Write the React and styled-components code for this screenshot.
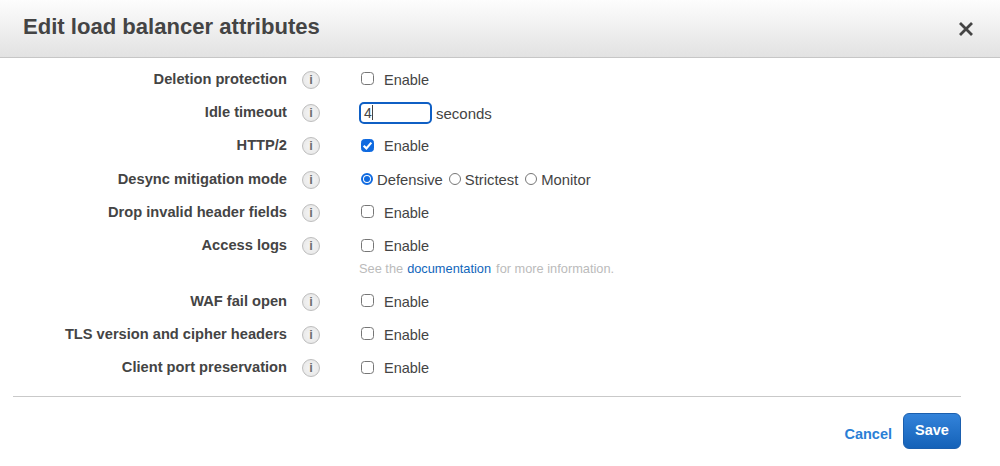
import React from "react";
import styled, { createGlobalStyle } from "styled-components";

const GlobalStyle = createGlobalStyle`
  html, body {
    margin: 0;
    background: #fff;
    font-family: "Liberation Sans", Arial, sans-serif;
    color: #444;
  }
`;

const Modal = styled.div`
  width: 1000px;
  height: 466px;
  overflow: hidden;
  display: flex;
  flex-direction: column;
`;

const Header = styled.header`
  height: 58px;
  box-sizing: border-box;
  padding: 0 26px 4px 23px;
  display: flex;
  align-items: center;
  justify-content: space-between;
  background: linear-gradient(#fdfdfd, #e2e2e2);
  border-bottom: 1px solid #c6c6c6;
`;

const Title = styled.h1`
  margin: 0;
  font-size: 22.08px;
  font-weight: 700;
  color: #444;
`;

const Close = styled.svg`
  width: 16px;
  height: 16px;
  margin-top: 5px;
  display: block;
`;

const Form = styled.div`
  padding: 5.3px 0 0;
  display: grid;
  grid-template-columns: 287px 48px 1fr;
  grid-template-rows: repeat(6, 33.25px) 22.2px repeat(3, 33.25px);
  align-items: center;
`;

const Label = styled.div`
  font-size: 14.65px;
  font-weight: 700;
  text-align: right;
  color: #444;
  margin-top: -2px;
`;

const InfoBadge = styled.span`
  justify-self: center;
  box-sizing: border-box;
  width: 18px;
  height: 18px;
  border: 1.5px solid #bdbdbd;
  border-radius: 50%;
  background: radial-gradient(#f6f6f6, #e4e4e4);
  color: #6f6f6f;
  font: 700 13px/15px "Liberation Sans", Arial, sans-serif;
  text-align: center;
`;

const Control = styled.div`
  display: flex;
  align-items: center;
  padding-left: 26px;
  font-size: 14.5px;
  color: #444;
`;

const Check = styled.span`
  width: 13px;
  height: 13px;
  border-radius: 3.5px;
  box-sizing: border-box;
  border: 1px solid ${(p) => (p.$on ? "#0f6ae0" : "#767676")};
  background: ${(p) => (p.$on ? "#0f6ae0" : "#fff")};
  margin: -2px 10px 0 0;
  display: flex;
  align-items: center;
  justify-content: center;
`;

const Radio = styled.span`
  width: 12px;
  height: 12px;
  border-radius: 50%;
  box-sizing: border-box;
  border: ${(p) => (p.$on ? "2px solid #0f6ae0" : "1px solid #767676")};
  background: #fff;
  margin: -2px 4px 0 0;
  display: flex;
  align-items: center;
  justify-content: center;
  &::after {
    content: "";
    display: ${(p) => (p.$on ? "block" : "none")};
    width: 6px;
    height: 6px;
    border-radius: 50%;
    background: #0f6ae0;
  }
`;

const RadioOption = styled.span`
  display: flex;
  align-items: center;
  margin-right: 7px;
  font-size: 14.8px;
  &:first-child {
    margin-right: 6px;
  }
`;

const NumberBox = styled.span`
  width: 66px;
  height: 18px;
  border: 2px solid #0f5fc4;
  border-radius: 5px;
  margin: -1px 4px 0 -2px;
  padding-left: 3px;
  box-sizing: content-box;
  display: flex;
  align-items: center;
  font-size: 14px;
  &::after {
    content: "";
    width: 1px;
    height: 15px;
    background: #444;
  }
`;

const Unit = styled.span`
  font-size: 15px;
`;

const HelpRow = styled.div`
  grid-column: 1 / 4;
  padding-left: 359px;
  font-size: 12.8px;
  color: #bbb;
  display: flex;
  align-items: center;
  gap: 5px;
  margin-top: -10px;
`;

const HelpLink = styled.a`
  color: #1166bb;
  text-decoration: none;
  margin-left: -1px;
`;

const Footer = styled.footer`
  margin: 11.6px 39px 0 13px;
  border-top: 1px solid #c9c9c9;
  padding-top: 16px;
  display: flex;
  justify-content: flex-end;
  align-items: center;
  gap: 11px;
`;

const CancelLink = styled.a`
  color: #2a7fd6;
  font-size: 14.5px;
  font-weight: 700;
  margin-top: 6px;
`;

const SaveButton = styled.button`
  width: 58px;
  height: 36px;
  border: 1px solid #1b5fae;
  border-radius: 6px;
  background: linear-gradient(#3383da, #1562b8);
  color: #fff;
  font: 700 14.5px "Liberation Sans", Arial, sans-serif;
  padding: 0 0 3px;
`;

function Enable({ on }) {
  return (
    <Control>
      <Check $on={on}>
        {on && (
          <svg width="11" height="11" viewBox="0 0 10 10">
            <path d="M1.5 5.2 L4 7.6 L8.5 2.4" fill="none" stroke="#fff" strokeWidth="2" />
          </svg>
        )}
      </Check>
      Enable
    </Control>
  );
}

function Row({ label, children }) {
  return (
    <>
      <Label>{label}</Label>
      <InfoBadge>i</InfoBadge>
      {children}
    </>
  );
}

export default function App() {
  return (
    <Modal>
      <GlobalStyle />
      <Header>
        <Title>Edit load balancer attributes</Title>
        <Close viewBox="0 0 16 16">
          <path d="M2 2 L14 14 M14 2 L2 14" stroke="#444" strokeWidth="2.8" />
        </Close>
      </Header>
      <Form>
        <Row label="Deletion protection"><Enable /></Row>
        <Row label="Idle timeout">
          <Control>
            <NumberBox>4</NumberBox>
            <Unit>seconds</Unit>
          </Control>
        </Row>
        <Row label="HTTP/2"><Enable on /></Row>
        <Row label="Desync mitigation mode">
          <Control>
            <RadioOption><Radio $on />Defensive</RadioOption>
            <RadioOption><Radio />Strictest</RadioOption>
            <RadioOption><Radio />Monitor</RadioOption>
          </Control>
        </Row>
        <Row label="Drop invalid header fields"><Enable /></Row>
        <Row label="Access logs"><Enable /></Row>
        <HelpRow>
          See the <HelpLink>documentation</HelpLink> for more information.
        </HelpRow>
        <Row label="WAF fail open"><Enable /></Row>
        <Row label="TLS version and cipher headers"><Enable /></Row>
        <Row label="Client port preservation"><Enable /></Row>
      </Form>
      <Footer>
        <CancelLink>Cancel</CancelLink>
        <SaveButton>Save</SaveButton>
      </Footer>
    </Modal>
  );
}
